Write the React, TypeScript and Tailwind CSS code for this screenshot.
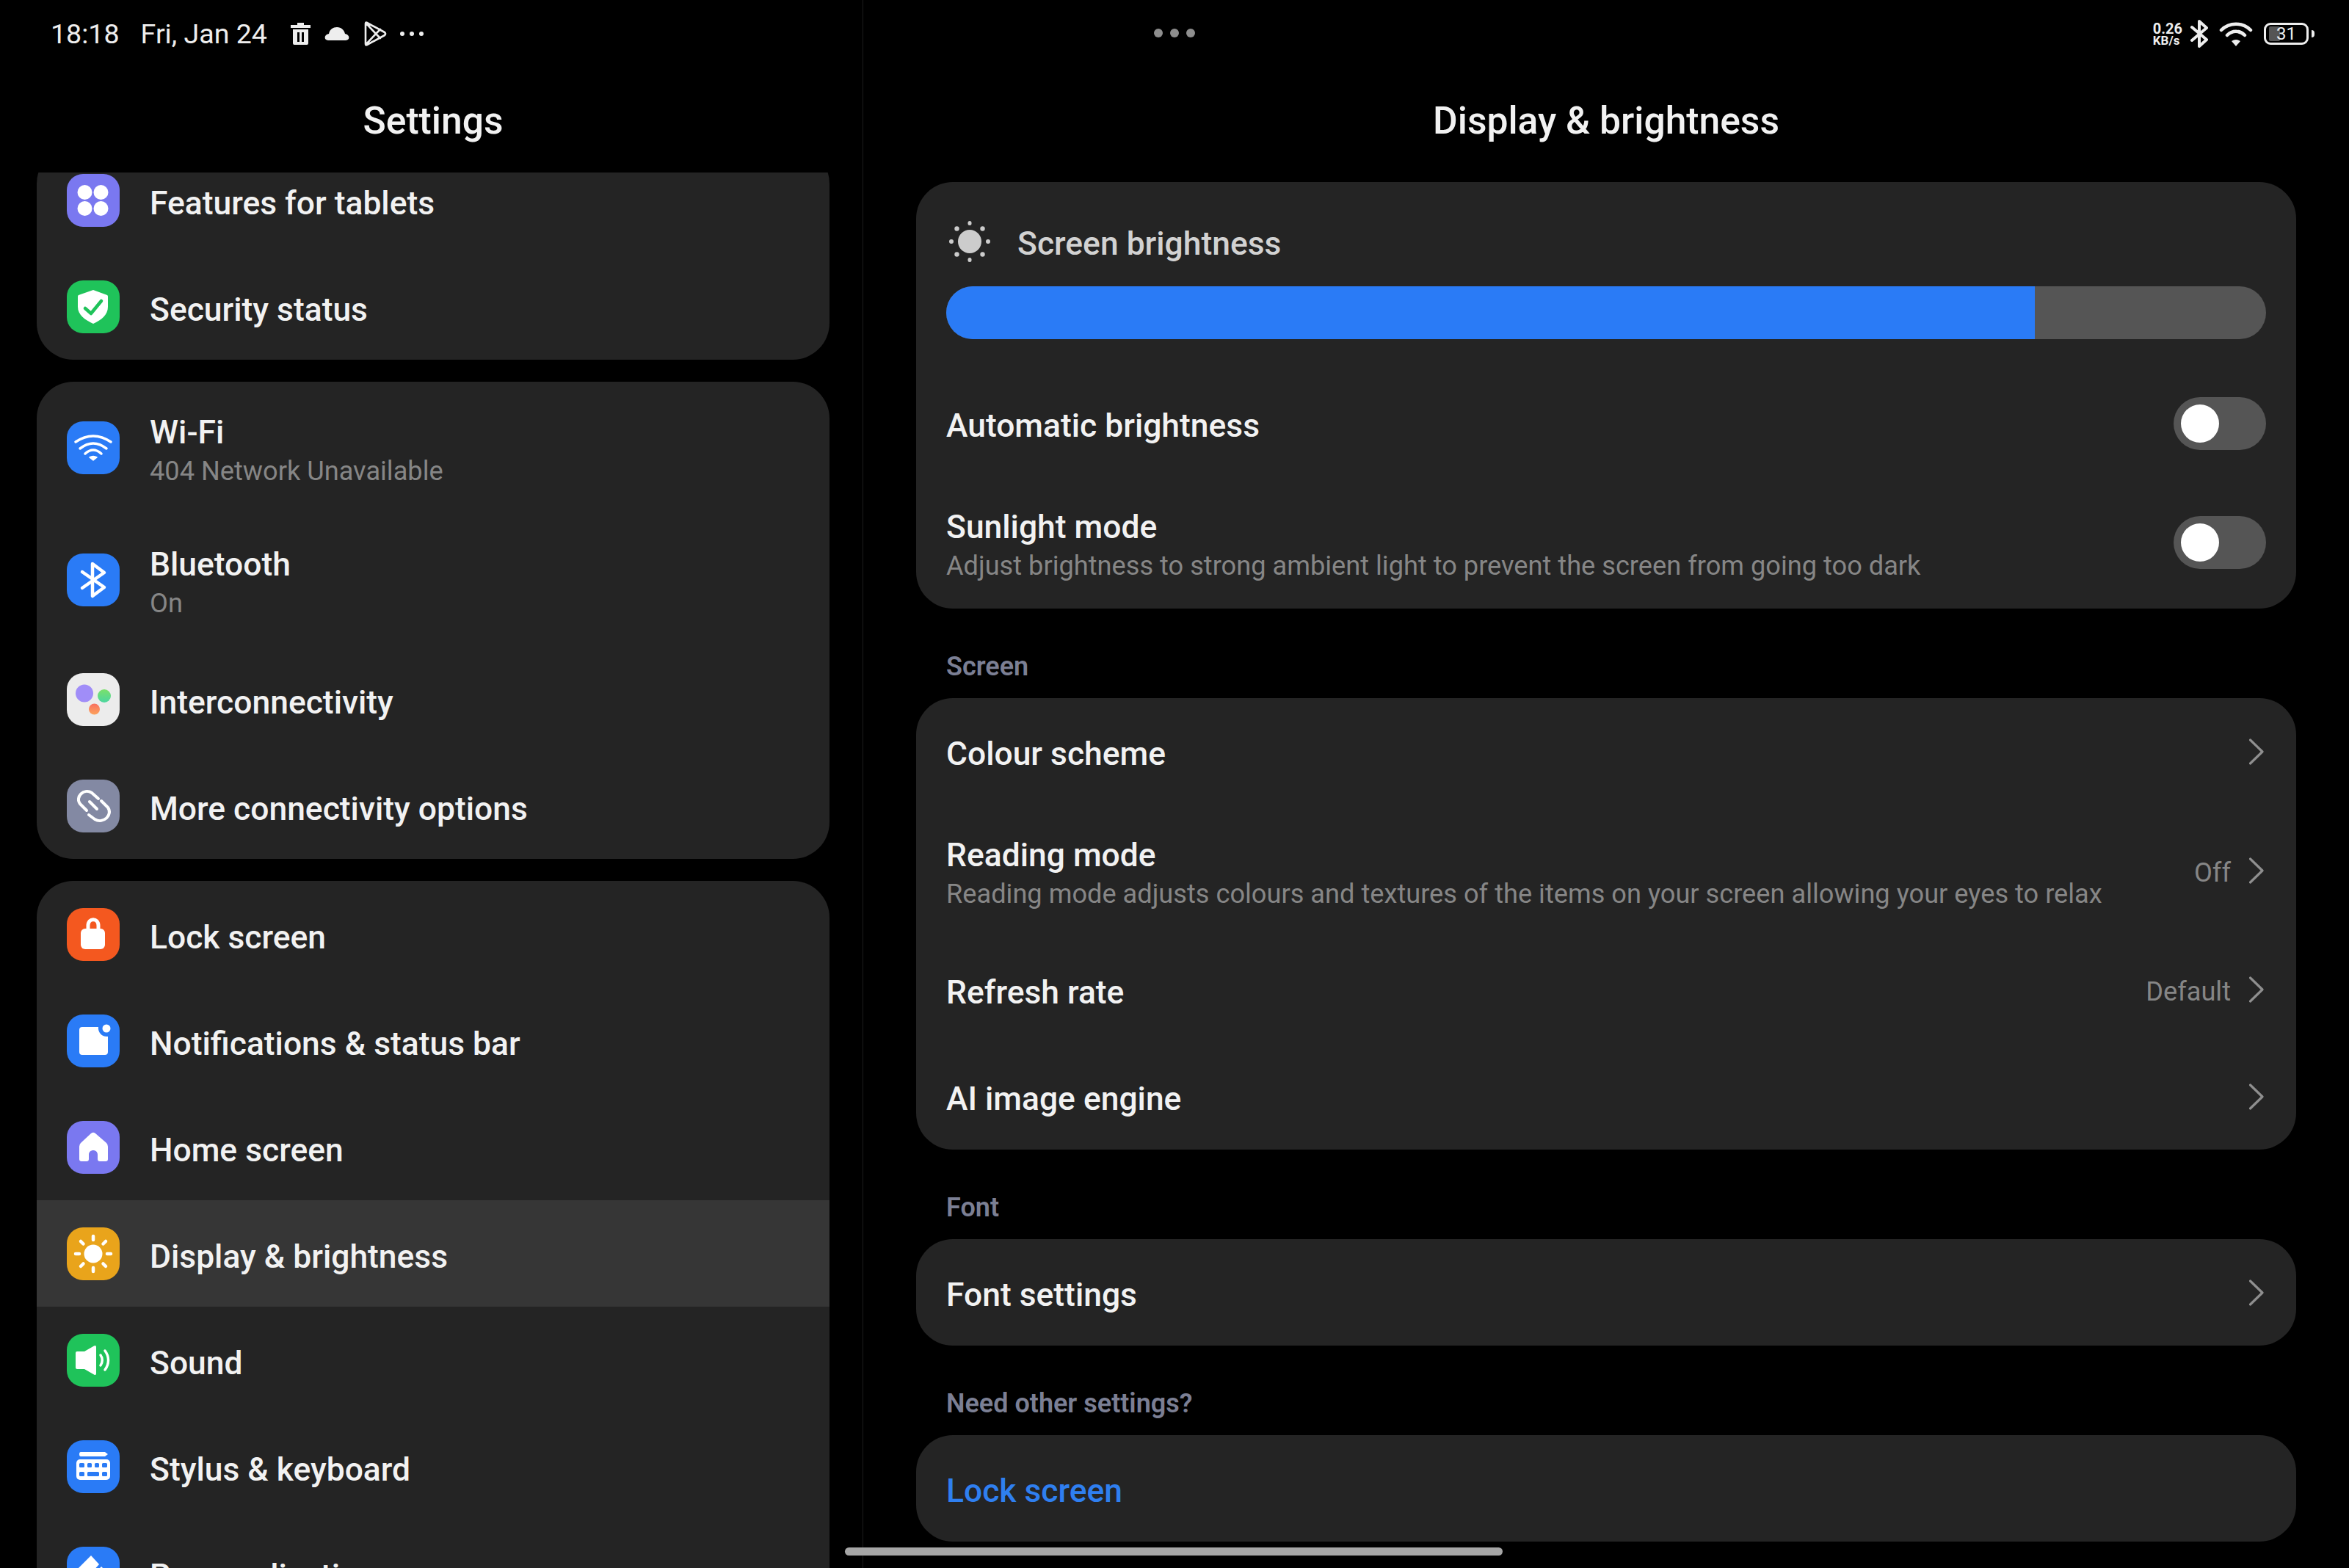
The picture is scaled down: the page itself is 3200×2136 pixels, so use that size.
import type { ReactNode } from "react";

const Squircle = ({ color, children }: { color: string; children: ReactNode }) => (
  <div className={`w-[72px] h-[72px] rounded-[22px] shrink-0 overflow-hidden ${color}`}>
    <svg viewBox="0 0 72 72" className="w-full h-full block">
      {children}
    </svg>
  </div>
);

const FeaturesIcon = () => (
  <Squircle color="bg-[#7a78f0]">
    <g fill="#fff">
      <circle cx="24.5" cy="25" r="10" />
      <circle cx="46.5" cy="25" r="10" />
      <circle cx="24.5" cy="47" r="10" />
      <circle cx="46.5" cy="47" r="10" />
    </g>
  </Squircle>
);

const SecurityIcon = () => (
  <Squircle color="bg-[#1fc35a]">
    <path d="M36 13 L55 20 Q56 20.5 56 22 V36 C56 47 47 54 36 59 C25 54 15 47 15 36 V22 Q15 20.5 16 20 Z" fill="#fff" />
    <path d="M25 38 L33 45 L47 28" fill="none" stroke="#1fc35a" strokeWidth="4.5" strokeLinecap="round" strokeLinejoin="round" />
  </Squircle>
);

const WifiIcon = () => (
  <Squircle color="bg-[#2a7bf6]">
    <g fill="none" stroke="#fff" strokeWidth="3.5" strokeLinecap="round">
      <path d="M12 28 Q36 12 60 28" />
      <path d="M18 37 Q36 23 54 37" />
      <path d="M25 44 Q36 34 47 44" />
    </g>
    <path d="M31 49 Q36 46 41 49 L36 53 Z" fill="#fff" stroke="#fff" strokeWidth="1.5" strokeLinejoin="round" />
  </Squircle>
);

const BluetoothIcon = () => (
  <Squircle color="bg-[#2a7bf6]">
    <path d="M21 25 L51 46 L35 58 V14 L51 26 L21 47" fill="none" stroke="#fff" strokeWidth="4.5" strokeLinecap="round" strokeLinejoin="round" />
  </Squircle>
);

const InterconnectIcon = () => (
  <Squircle color="bg-[#ececec]">
    <defs>
      <linearGradient id="dotGreen" x1="0" y1="0" x2="0" y2="1">
        <stop offset="0" stopColor="#7be06a" />
        <stop offset="1" stopColor="#4cd6a0" />
      </linearGradient>
      <linearGradient id="dotRed" x1="0" y1="0" x2="0" y2="1">
        <stop offset="0" stopColor="#f8705f" />
        <stop offset="1" stopColor="#fca35c" />
      </linearGradient>
    </defs>
    <circle cx="24" cy="27.5" r="12" fill="#a08df8" />
    <circle cx="51" cy="31" r="9" fill="url(#dotGreen)" />
    <circle cx="37.5" cy="49" r="7.5" fill="url(#dotRed)" />
  </Squircle>
);

const LinkIcon = () => (
  <Squircle color="bg-[#8389a3]">
    <g fill="none" stroke="#fff" strokeWidth="4" strokeLinecap="round" strokeLinejoin="round">
      <path d="M27 42 L18 33 C11 24 23 11 34 18 L43 26" />
      <path d="M47 29 L56 38 C63 48 50 61 38 54 L30 48" />
      <path d="M31 30 L41 40" />
    </g>
  </Squircle>
);

const LockIcon = () => (
  <Squircle color="bg-[#f4581f]">
    <path d="M29 30 V24 C29 13 43 13 43 24 V30" fill="none" stroke="#fff" strokeWidth="5" />
    <rect x="19" y="28" width="33" height="28" rx="6" fill="#fff" />
  </Squircle>
);

const NotificationIcon = () => (
  <Squircle color="bg-[#2a7bf6]">
    <path d="M21 17 H43 C42 24 48 31 56 30 V51 Q56 55 52 55 H21 Q17 55 17 51 V21 Q17 17 21 17 Z" fill="#fff" />
    <circle cx="54" cy="19" r="5.5" fill="#fff" />
  </Squircle>
);

const HomeIcon = () => (
  <Squircle color="bg-[#7a78f0]">
    <path d="M33 17 Q36 14.5 39 17 L54 30 Q56 32 56 35 V52 Q56 55 53 55 H45 Q42 55 42 52 V46 C42 38 30 38 30 46 V52 Q30 55 27 55 H20 Q17 55 17 52 V35 Q17 32 19 30 Z" fill="#fff" />
  </Squircle>
);

const SunIcon = () => (
  <Squircle color="bg-[#e9a41b]">
    <circle cx="36" cy="36" r="12.5" fill="#fff" />
    <g stroke="#fff" strokeWidth="4.5" strokeLinecap="round">
      <path d="M36 12 V17" />
      <path d="M36 55 V60" />
      <path d="M12 36 H17" />
      <path d="M55 36 H60" />
      <path d="M19 19 L22.5 22.5" />
      <path d="M49.5 49.5 L53 53" />
      <path d="M53 19 L49.5 22.5" />
      <path d="M22.5 49.5 L19 53" />
    </g>
  </Squircle>
);

const SoundIcon = () => (
  <Squircle color="bg-[#1fc35a]">
    <path d="M12 26 Q12 24 14 24 H24 L37 16.5 Q40 15 40 18 V54 Q40 57 37 55.5 L24 48 H14 Q12 48 12 46 Z" fill="#fff" />
    <g fill="none" stroke="#fff" strokeWidth="3.5" strokeLinecap="round">
      <path d="M46 29 C49 33 49 39 46 43" />
      <path d="M52 23 C58 31 58 41 52 49" />
    </g>
  </Squircle>
);

const KeyboardIcon = () => (
  <Squircle color="bg-[#2a7bf6]">
    <path d="M19 16 H52 L56 19 L52 22 H19 Q17 22 17 19 Q17 16 19 16 Z" fill="#fff" />
    <rect x="13" y="26" width="46" height="28" rx="5" fill="#fff" />
    <g fill="#2a7bf6">
      <rect x="17" y="31" width="7" height="6" rx="1.5" />
      <rect x="28" y="31" width="6" height="6" rx="1.5" />
      <rect x="38" y="31" width="6" height="6" rx="1.5" />
      <rect x="48" y="31" width="7" height="6" rx="1.5" />
      <rect x="17" y="43" width="7" height="6" rx="1.5" />
      <rect x="28" y="43" width="16" height="6" rx="1.5" />
      <rect x="48" y="43" width="7" height="6" rx="1.5" />
    </g>
  </Squircle>
);

const PersonalIcon = () => (
  <Squircle color="bg-[#2a7bf6]">
    <path d="M33 12 L44 24 L26 44 L14 31 Z" fill="#fff" />
    <path d="M47 27 L52 32 L34 52 L29 47 Z" fill="#fff" />
  </Squircle>
);

const Chevron = () => (
  <svg viewBox="0 0 20 36" className="w-[20px] h-[36px] mr-[3px] shrink-0">
    <path d="M1.5 2 L18 18 L1.5 34" fill="none" stroke="#8f8f8f" strokeWidth="3.2" strokeLinecap="round" strokeLinejoin="round" />
  </svg>
);

const Toggle = () => (
  <div className="w-[126px] h-[72px] rounded-full bg-[#555555] flex items-center pl-[10px] shrink-0">
    <div className="w-[52px] h-[52px] rounded-full bg-white" />
  </div>
);

type NavRowProps = {
  icon: ReactNode;
  title: string;
  sub?: string;
  active?: boolean;
};

const NavRow = ({ icon, title, sub, active }: NavRowProps) => (
  <div className={`flex items-center gap-[41px] pl-[41px] ${sub ? "h-[180px]" : "h-[145px]"} ${active ? "bg-[#363636]" : ""}`}>
    {icon}
    <div className="flex flex-col pt-[9px]">
      <span className="text-[44.4px] leading-[54px] font-medium text-[#f2f2f2]">{title}</span>
      {sub && <span className="text-[36.2px] leading-[52px] text-[#868686]">{sub}</span>}
    </div>
  </div>
);

const NavCard = ({ children }: { children: ReactNode }) => (
  <div className="rounded-[50px] bg-[#242424] overflow-hidden shrink-0">{children}</div>
);

type SettingRowProps = {
  title: string;
  sub?: string;
  value?: string;
  right?: ReactNode;
};

const SettingRow = ({ title, sub, value, right }: SettingRowProps) => (
  <div className={`flex items-center justify-between pl-[41px] pr-[41px] ${sub ? "h-[180px]" : "h-[145px]"}`}>
    <div className={`flex flex-col ${sub ? "pt-[9px]" : "pt-[6px]"}`}>
      <span className="text-[44.4px] leading-[54px] font-medium text-[#f2f2f2]">{title}</span>
      {sub && <span className="text-[36.2px] leading-[52px] text-[#868686]">{sub}</span>}
    </div>
    <div className="flex items-center gap-[25px]">
      {value && <span className="pt-[6px] text-[36.2px] text-[#868686]">{value}</span>}
      {right ?? <Chevron />}
    </div>
  </div>
);

const SectionLabel = ({ children, className }: { children: ReactNode; className: string }) => (
  <div className={`pl-[41px] text-[36px] leading-[44px] font-semibold text-[#7b7f94] ${className}`}>{children}</div>
);

const LeftStatus = () => (
  <div className="h-[92px] flex items-center pl-[69px] text-[37.6px] text-[#eeeeee]">
    <span>18:18</span>
    <span className="ml-[29px]">Fri, Jan 24</span>
    <svg viewBox="0 0 27 30" className="w-[27px] h-[30px] ml-[32px]">
      <path d="M9 0 H18 V3 H27 V7 H0 V3 H9 Z" fill="#eee" />
      <path d="M3 9 H24 V28 Q24 30 22 30 H5 Q3 30 3 28 Z M9 13 V26 H12 V13 Z M15 13 V26 H18 V13 Z" fill="#eee" fillRule="evenodd" />
    </svg>
    <svg viewBox="0 0 34 18" className="w-[34px] h-[18px] ml-[19px]">
      <path d="M5 18 C-1 18 -1 10 6 9 C7 3 12 0 17 0 C23 0 27 4 28 9 C35 10 35 18 29 18 Z" fill="#eee" />
    </svg>
    <svg viewBox="0 0 32 34" className="w-[32px] h-[34px] ml-[19px]">
      <path d="M3 3 Q3 1 5 2 L29 15 Q31 17 29 19 L5 32 Q3 33 3 31 Z M4 3 L17 17 L4 31 M17 17 L23 11 M17 17 L23 23" fill="none" stroke="#eee" strokeWidth="2.6" strokeLinejoin="round" strokeLinecap="round" />
    </svg>
    <div className="flex gap-[7px] ml-[18px]">
      <div className="w-[6px] h-[6px] rounded-full bg-[#eeeeee]" />
      <div className="w-[6px] h-[6px] rounded-full bg-[#eeeeee]" />
      <div className="w-[6px] h-[6px] rounded-full bg-[#eeeeee]" />
    </div>
  </div>
);

const RightStatus = () => (
  <div className="h-[92px] flex items-center justify-end pr-[47px]">
    <div className="flex flex-col items-start font-bold text-[#eeeeee]">
      <span className="text-[20px] leading-[18px]">0.26</span>
      <span className="text-[17px] leading-[15px]">KB/s</span>
    </div>
    <svg viewBox="0 0 24 38" className="w-[24px] h-[38px] ml-[11px]">
      <path d="M2 10 L22 27 L12 36 V2 L22 11 L2 28" fill="none" stroke="#eee" strokeWidth="4" strokeLinejoin="round" strokeLinecap="round" />
    </svg>
    <svg viewBox="0 0 46 33" className="w-[46px] h-[33px] ml-[15px]">
      <g fill="none" stroke="#eee" strokeWidth="4.5" strokeLinecap="round">
        <path d="M3 11 C14 0 32 0 43 11" />
        <path d="M11 18 C18 11 28 11 35 18" />
      </g>
      <path d="M17 26 Q23 22 29 26 L23 33 Z" fill="#eee" />
    </svg>
    <div className="relative ml-[15px] w-[61px] h-[30px] rounded-[9px] border-[3px] border-[#eeeeee] flex items-center justify-center">
      <div className="absolute left-[4px] top-[2px] bottom-[2px] w-[15px] rounded-[2px] bg-[#555555]" />
      <span className="relative text-[24px] leading-none text-[#eeeeee]">31</span>
    </div>
    <div className="ml-[4px] w-[4px] h-[10px] rounded-r-full bg-[#eeeeee]" />
  </div>
);

export default function App() {
  return (
    <div className="relative w-[3200px] h-[2136px] overflow-hidden bg-black flex font-[Roboto,sans-serif]">
      <aside className="w-[1176px] h-full border-r border-[#1c1c1c] flex flex-col shrink-0">
        <LeftStatus />
        <h1 className="h-[143px] pt-[3px] pl-[5px] flex items-center justify-center text-[51.6px] font-medium text-[#f2f2f2]">Settings</h1>
        <div className="flex-1 overflow-hidden pl-[50px] pr-[45px]">
          <div className="flex flex-col gap-[30px] -mt-[35px]">
            <NavCard>
              <NavRow icon={<FeaturesIcon />} title="Features for tablets" />
              <NavRow icon={<SecurityIcon />} title="Security status" />
            </NavCard>
            <NavCard>
              <NavRow icon={<WifiIcon />} title="Wi-Fi" sub="404 Network Unavailable" />
              <NavRow icon={<BluetoothIcon />} title="Bluetooth" sub="On" />
              <NavRow icon={<InterconnectIcon />} title="Interconnectivity" />
              <NavRow icon={<LinkIcon />} title="More connectivity options" />
            </NavCard>
            <NavCard>
              <NavRow icon={<LockIcon />} title="Lock screen" />
              <NavRow icon={<NotificationIcon />} title="Notifications & status bar" />
              <NavRow icon={<HomeIcon />} title="Home screen" />
              <NavRow icon={<SunIcon />} title="Display & brightness" active />
              <NavRow icon={<SoundIcon />} title="Sound" />
              <NavRow icon={<KeyboardIcon />} title="Stylus & keyboard" />
              <NavRow icon={<PersonalIcon />} title="Personalization" />
            </NavCard>
          </div>
        </div>
      </aside>

      <main className="flex-1 h-full flex flex-col">
        <RightStatus />
        <h2 className="h-[143px] pt-[3px] flex items-center justify-center text-[51.6px] font-medium text-[#f2f2f2]">Display &amp; brightness</h2>
        <div className="flex flex-col pl-[72px] pr-[72px] pt-[13px]">
          <section className="h-[581px] rounded-[50px] bg-[#242424] flex flex-col">
            <div className="h-[142px] pt-[20px] pl-[45px] pr-[41px] flex items-center">
              <svg viewBox="0 0 56 56" className="w-[56px] h-[56px] shrink-0">
                <circle cx="28" cy="28" r="16" fill="#cccccc" />
                <g fill="#cccccc">
                  <rect x="25.5" y="0" width="5" height="6" rx="2.5" />
                  <rect x="25.5" y="50" width="5" height="6" rx="2.5" />
                  <circle cx="3" cy="28" r="3" />
                  <circle cx="53" cy="28" r="3" />
                  <circle cx="10.5" cy="10.5" r="3.2" />
                  <circle cx="45.5" cy="10.5" r="3.2" />
                  <circle cx="10.5" cy="45.5" r="3.2" />
                  <circle cx="45.5" cy="45.5" r="3.2" />
                </g>
              </svg>
              <span className="ml-[37px] pt-[6px] text-[44.4px] font-medium text-[#d2d2d2]">Screen brightness</span>
            </div>
            <div className="mx-[41px] h-[72px] rounded-full bg-[#555555] overflow-hidden">
              <div className="h-full bg-[#2a7bf6]" style={{ width: `${(1483 / 1798) * 100}%` }} />
            </div>
            <div className="mt-[42px]">
              <SettingRow title="Automatic brightness" right={<Toggle />} />
            </div>
            <SettingRow title="Sunlight mode" sub="Adjust brightness to strong ambient light to prevent the screen from going too dark" right={<Toggle />} />
          </section>

          <SectionLabel className="pt-[57px] pb-[21px]">Screen</SectionLabel>
          <section className="rounded-[50px] bg-[#242424]">
            <SettingRow title="Colour scheme" />
            <SettingRow title="Reading mode" sub="Reading mode adjusts colours and textures of the items on your screen allowing your eyes to relax" value="Off" />
            <SettingRow title="Refresh rate" value="Default" />
            <SettingRow title="AI image engine" />
          </section>

          <SectionLabel className="pt-[57px] pb-[21px]">Font</SectionLabel>
          <section className="rounded-[50px] bg-[#242424]">
            <SettingRow title="Font settings" />
          </section>

          <SectionLabel className="pt-[57px] pb-[21px]">Need other settings?</SectionLabel>
          <section className="rounded-[50px] bg-[#242424] h-[145px] pl-[41px] pt-[8px] flex items-center">
            <span className="text-[44.4px] font-medium text-[#2f7ff0]">Lock screen</span>
          </section>
        </div>
      </main>

      {/* window handle and gesture bar float over the panels */}
      <div className="absolute top-[39px] left-[1572px] flex gap-[10px]">
        <div className="w-[12px] h-[12px] rounded-full bg-[#8e8e8e]" />
        <div className="w-[12px] h-[12px] rounded-full bg-[#8e8e8e]" />
        <div className="w-[12px] h-[12px] rounded-full bg-[#8e8e8e]" />
      </div>
      <div className="absolute left-[1151px] top-[2108px] w-[896px] h-[11px] rounded-full bg-[#a6a6a6]" />
    </div>
  );
}
